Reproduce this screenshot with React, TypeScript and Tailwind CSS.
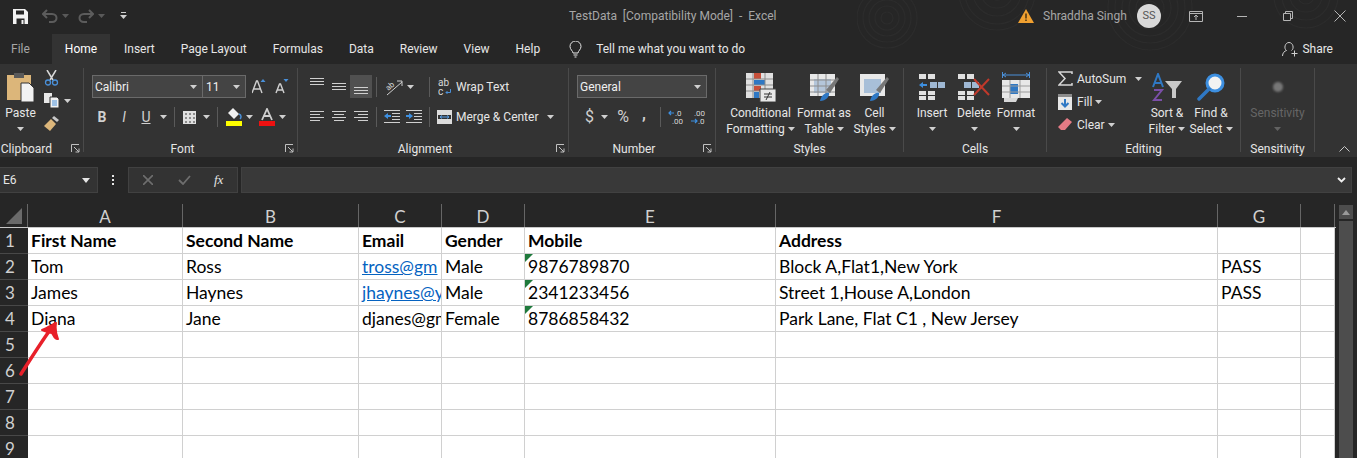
import type { ReactNode } from "react";

const COLS = [
  { name: "A", w: "w-[155px]" },
  { name: "B", w: "w-[176px]" },
  { name: "C", w: "w-[83px]" },
  { name: "D", w: "w-[83px]" },
  { name: "E", w: "w-[251px]" },
  { name: "F", w: "w-[442px]" },
  { name: "G", w: "w-[83px]" },
  { name: "", w: "w-[34px]" },
];

const ROWS: string[][] = [
  ["First Name", "Second Name", "Email", "Gender", "Mobile", "Address", "", ""],
  ["Tom", "Ross", "tross@gm", "Male", "9876789870", "Block A,Flat1,New York", "PASS", ""],
  ["James", "Haynes", "jhaynes@y", "Male", "2341233456", "Street 1,House A,London", "PASS", ""],
  ["Diana", "Jane", "djanes@gm", "Female", "8786858432", "Park Lane, Flat C1 , New Jersey", "", ""],
  ["", "", "", "", "", "", "", ""],
  ["", "", "", "", "", "", "", ""],
  ["", "", "", "", "", "", "", ""],
  ["", "", "", "", "", "", "", ""],
  ["", "", "", "", "", "", "", ""],
];

function Caret({ className = "" }: { className?: string }) {
  return (
    <svg width="7" height="4" viewBox="0 0 7 4" className={`shrink-0 ${className}`}>
      <path d="M0 0h7L3.5 4z" fill="#d0d0d0" />
    </svg>
  );
}

function Launcher() {
  return (
    <svg width="9" height="9" viewBox="0 0 9 9" className="mr-[3px]">
      <path d="M.5 8V.5H8M3 3l5 5M8 4.500V8H4.500" fill="none" stroke="#c0c0c0" />
    </svg>
  );
}

function Divider({ className = "" }: { className?: string }) {
  return <div className={`w-px shrink-0 bg-[#5a5a5a] ${className}`} />;
}

function Group({
  label,
  width,
  launcher,
  tail = "",
  children,
}: {
  label: string;
  width: string;
  launcher?: boolean;
  tail?: string;
  children: ReactNode;
}) {
  return (
    <>
      <div className={`${width} flex h-full shrink-0 flex-col`}>
        <div className="flex h-[76px] min-h-0">{children}</div>
        <div className="flex h-[17px] items-center text-[12px] text-[#e6e6e6]">
          <span className="flex-1" />
          <span>{label}</span>
          <span className={`flex flex-1 justify-end ${tail}`}>{launcher && <Launcher />}</span>
        </div>
      </div>
      <div className="my-[4px] h-[84px] w-px shrink-0 bg-[#4a4a4a]" />
    </>
  );
}

function Big({ icon, lines, width, disabled }: { icon: ReactNode; lines: [string, string?]; width: string; disabled?: boolean }) {
  return (
    <div className={`${width} flex shrink-0 flex-col items-center pt-[8px] text-[12px] leading-[16px] ${disabled ? "text-[#666]" : "text-[#e6e6e6]"}`}>
      <div className="flex h-[30px] items-center justify-center">{icon}</div>
      <div className="mt-[3px] whitespace-nowrap">{lines[0]}</div>
      <div className="flex h-[16px] items-center gap-[3px] whitespace-nowrap">
        {lines[1]}
        <Caret className={disabled ? "opacity-30" : ""} />
      </div>
    </div>
  );
}

function Rings() {
  return (
    <svg width="500" height="64" viewBox="0 0 500 64" className="pointer-events-none absolute right-0 top-0">
      <g fill="none" stroke="#2c2c2c" strokeWidth="1.200">
        {[6, 12, 18, 24, 30].map((r) => (
          <circle key={r} cx="30" cy="18" r={r} />
        ))}
        {[8, 16, 24, 32, 38].map((r) => (
          <circle key={r} cx="140" cy="-8" r={r} />
        ))}
        {[7, 14, 21, 28, 35, 42].map((r) => (
          <circle key={r} cx="293" cy="8" r={r} />
        ))}
        {[8, 16, 24, 32].map((r) => (
          <circle key={r} cx="449" cy="-4" r={r} />
        ))}
      </g>
    </svg>
  );
}

function TitleBar() {
  return (
    <div className="relative flex h-[32px] items-center text-[12px] text-[#a6a6a6]">
      <div className="flex w-[569px] shrink-0 items-center">
        <svg width="15" height="15" viewBox="0 0 15 15" className="ml-[13px]">
          <path d="M0 0h12l3 3v12H0z" fill="#f2f2f2" />
          <path d="M3 1.500h8v4H3z" fill="#262626" />
          <path d="M3.500 9.500h8V15h-8z" fill="#262626" />
          <path d="M8.500 11h2v4h-2z" fill="#f2f2f2" />
        </svg>
        <svg width="16" height="14" viewBox="0 0 16 14" className="ml-[14px]">
          <path d="M5 1 1 5l4 4M1 5h9c6 0 6 8 0 8H7" fill="none" stroke="#5c5c5c" strokeWidth="2" />
        </svg>
        <Caret className="ml-[4px] opacity-30" />
        <svg width="16" height="14" viewBox="0 0 16 14" className="ml-[9px]">
          <path d="M11 1l4 4-4 4M15 5H6c-6 0-6 8 0 8h3" fill="none" stroke="#5c5c5c" strokeWidth="2" />
        </svg>
        <Caret className="ml-[4px] opacity-30" />
        <svg width="7" height="8" viewBox="0 0 7 8" className="ml-[15px]">
          <path d="M1 0h5v1H1zM0 3h7L3.500 7z" fill="#d0d0d0" />
        </svg>
      </div>
      <div className="whitespace-pre">TestData  [Compatibility Mode]  -  Excel</div>
      <div className="ml-auto flex items-center pr-[11px]">
        <svg width="16" height="14" viewBox="0 0 16 14">
          <path d="M8 0l8 14H0z" fill="#f0a030" />
          <path d="M7.300 4.500h1.400v5H7.300zM7.300 10.500h1.400V12H7.300z" fill="#3a2a10" />
        </svg>
        <div className="ml-[9px] w-[83px] whitespace-nowrap">Shraddha Singh</div>
        <div className="ml-[11px] flex h-[24px] w-[24px] items-center justify-center rounded-full bg-[#d9d9d9] text-[11px] text-[#555]">SS</div>
        <svg width="14" height="11" viewBox="0 0 14 11" className="ml-[28px]">
          <path d="M.5.5h13v10H.5zM.5 2.500h13M7 9V4.500M5 6l2-2 2 2" fill="none" stroke="#b5b5b5" />
        </svg>
        <div className="ml-[34px] h-px w-[10px] bg-[#b5b5b5]" />
        <svg width="10" height="10" viewBox="0 0 10 10" className="ml-[36px]">
          <path d="M.5 2.500h7v7h-7zM2.500 2.500v-2h7v7h-2" fill="none" stroke="#b5b5b5" />
        </svg>
        <svg width="12" height="12" viewBox="0 0 12 12" className="ml-[41px]">
          <path d="M.5.5l11 11M11.500.5l-11 11" stroke="#b5b5b5" />
        </svg>
      </div>
    </div>
  );
}

function TabRow() {
  const tabs: [string, string][] = [
    ["Insert", "ml-[14px]"],
    ["Page Layout", "ml-[26px]"],
    ["Formulas", "ml-[26px]"],
    ["Data", "ml-[26px]"],
    ["Review", "ml-[26px]"],
    ["View", "ml-[26px]"],
    ["Help", "ml-[26px]"],
  ];
  return (
    <div className="relative flex h-[32px] items-end text-[12px] text-[#e6e6e6]">
      <div className="ml-[11px] flex h-[30px] w-[41px] items-center text-[#a6a6a6]">File</div>
      <div className="flex h-[30px] w-[58px] items-center justify-center bg-[#333333] text-white">Home</div>
      {tabs.map(([t, m]) => (
        <div key={t} className={`flex h-[30px] items-center whitespace-nowrap ${m}`}>{t}</div>
      ))}
      <div className="ml-[29px] flex h-[30px] items-center gap-[14px] whitespace-nowrap">
        <svg width="13" height="17" viewBox="0 0 13 17">
          <path d="M4 12c0-2-3-3.500-3-6.500a5.500 5.500 0 0 1 11 0c0 3-3 4.500-3 6.500zM4.500 14h4M5.500 16h2" fill="none" stroke="#e6e6e6" />
        </svg>
        Tell me what you want to do
      </div>
      <div className="ml-auto mr-[24px] flex h-[30px] items-center gap-[4px]">
        <svg width="16" height="16" viewBox="0 0 16 16">
          <path d="M.5 15c0-3 2-5 4-5.500-3-2-1.500-8 2.500-8s5.500 6 2.500 8M12.500 9.500v6M9.500 12.500h6" fill="none" stroke="#d0d0d0" />
        </svg>
        Share
      </div>
    </div>
  );
}

function Clipboard() {
  return (
    <Group label="Clipboard" width="w-[83px]" launcher tail="pl-[19px]">
      <div className="flex w-[41px] shrink-0 flex-col items-center pt-[8px] text-[12px] leading-[16px] text-[#e6e6e6]">
        <svg width="29" height="30" viewBox="0 0 29 30">
          <path d="M1 3h24v25H1z" fill="#dcb67a" />
          <path d="M8 1h10v5H8z" fill="#5a5a5a" />
          <path d="M15 11h8l5 5v14H15z" fill="#f2f2f2" stroke="#333" />
        </svg>
        <div className="mt-[3px]">Paste</div>
        <div className="flex h-[16px] items-center"><Caret /></div>
      </div>
      <div className="flex flex-col pt-[6px]">
        <svg width="15" height="16" viewBox="0 0 15 16" className="ml-[3px]">
          <path d="M3 0l6 10M12 0 6 10" stroke="#d8d8d8" strokeWidth="1.500" />
          <circle cx="4" cy="12.500" r="2.500" fill="none" stroke="#4a90d9" strokeWidth="1.300" />
          <circle cx="11" cy="12.500" r="2.500" fill="none" stroke="#4a90d9" strokeWidth="1.300" />
        </svg>
        <div className="mt-[7px] flex items-center gap-[4px]">
          <svg width="16" height="15" viewBox="0 0 16 15" className="ml-[3px]">
            <path d="M0 0h8v10H0z" fill="#e8e8e8" />
            <path d="M6 4h7l2 2v9H6z" fill="#f2f2f2" stroke="#333" />
            <path d="M8 8h5M8 10h5M8 12h5" stroke="#4a90d9" />
          </svg>
          <Caret />
        </div>
        <svg width="16" height="15" viewBox="0 0 16 15" className="ml-[3px] mt-[8px]">
          <path d="M10 0l5 4-2 2-5-4z" fill="#c8c8c8" />
          <path d="M7 3l5 5-6 7-6-5z" fill="#dcb67a" />
        </svg>
      </div>
    </Group>
  );
}

function FontGroup() {
  return (
    <Group label="Font" width="w-[213px]" launcher tail="pl-[16px]">
      <div className="flex w-full flex-col pt-[11px]">
        <div className="ml-[8px] flex items-center">
          <div className="flex h-[23px] w-[111px] items-center justify-between border border-[#6a6a6a] bg-[#444444] pl-[2px] pr-[5px] text-[12px] text-[#f0f0f0]">
            Calibri
            <Caret />
          </div>
          <div className="flex h-[23px] w-[43px] items-center justify-between border border-l-0 border-[#6a6a6a] bg-[#444444] pl-[3px] pr-[5px] text-[12px] text-[#f0f0f0]">
            11
            <Caret />
          </div>
          <svg width="15" height="15" viewBox="0 0 15 15" className="ml-[6px]">
            <path d="M0 14 4.500 2h1L10 14M2 10h6" fill="none" stroke="#d0d0d0" strokeWidth="1.400" />
            <path d="M8.500 3 11 0l2.500 3z" fill="#4a90d9" />
          </svg>
          <svg width="15" height="15" viewBox="0 0 15 15" className="ml-[8px]">
            <path d="M1 14 4.500 5h1L9 14M2.500 11h5" fill="none" stroke="#d0d0d0" strokeWidth="1.400" />
            <path d="M8.500 0h5L11 3z" fill="#4a90d9" />
          </svg>
        </div>
        <div className="ml-[7px] mt-[8px] flex h-[22px] items-center text-[14px] text-[#d0d0d0]">
          <span className="w-[22px] text-center font-bold">B</span>
          <span className="w-[22px] text-center italic">I</span>
          <span className="w-[22px] text-center underline">U</span>
          <Caret className="ml-[3px]" />
          <Divider className="ml-[7px] h-[20px]" />
          <svg width="13" height="13" viewBox="0 0 13 13" className="ml-[8px]">
            <path d="M0 0h13v13H0z" fill="#e0e0e0" />
            <path d="M2 2h2v2H2zM6 2h2v2H6zM10 2h2v2h-2zM2 6h2v2H2zM6 6h2v2H6zM10 6h2v2h-2zM2 10h2v2H2zM6 10h2v2H6zM10 10h2v2h-2z" fill="#8c8c8c" />
          </svg>
          <Caret className="ml-[7px]" />
          <Divider className="ml-[7px] h-[20px]" />
          <svg width="16" height="18" viewBox="0 0 16 18" className="ml-[8px]">
            <path d="M7 0l6 6-5 5-6-6z" fill="#f0f0f0" />
            <path d="M13 6c3 1 2 4 1 5" fill="none" stroke="#4a90d9" strokeWidth="1.500" />
            <path d="M0 13h16v5H0z" fill="#ffff00" />
          </svg>
          <Caret className="ml-[4px]" />
          <svg width="16" height="18" viewBox="0 0 16 18" className="ml-[6px]">
            <path d="M3 12 8 1l5 11M5 8h6" fill="none" stroke="#d0d0d0" strokeWidth="1.800" />
            <path d="M0 13h16v5H0z" fill="#ee1111" />
          </svg>
          <Caret className="ml-[4px]" />
        </div>
      </div>
    </Group>
  );
}

function AlignmentGroup() {
  return (
    <Group label="Alignment" width="w-[270px]" launcher tail="pl-[16px]">
      <div className="flex w-full flex-col pt-[11px]">
        <div className="ml-[12px] flex h-[23px] items-center">
          <svg width="14" height="23" viewBox="0 0 14 23"><path d="M0 3h14v1H0zM0 6h14v1H0zM0 9h14v1H0z" fill="#d0d0d0" /></svg>
          <svg width="14" height="23" viewBox="0 0 14 23" className="ml-[8px]"><path d="M0 8h14v1H0zM0 11h14v1H0zM0 14h14v1H0z" fill="#d0d0d0" /></svg>
          <div className="ml-[4px] flex h-[23px] w-[22px] items-center justify-center bg-[#505050]">
            <svg width="14" height="23" viewBox="0 0 14 23"><path d="M0 12h14v1H0zM0 15h14v1H0zM0 18h14v1H0z" fill="#d0d0d0" /></svg>
          </div>
          <Divider className="ml-[4px] h-[20px]" />
          <svg width="19" height="18" viewBox="0 0 19 18" className="ml-[7px]">
            <path d="M3 17 18 4M13 3h5v5" fill="none" stroke="#d0d0d0" />
            <text x="2" y="11" fontSize="8" fill="#d0d0d0" transform="rotate(-40 6 9)">ab</text>
          </svg>
          <Caret className="ml-[4px]" />
          <Divider className="ml-[15px] h-[20px]" />
          <svg width="14" height="18" viewBox="0 0 14 18" className="ml-[8px]">
            <text x="0" y="8" fontSize="10" fill="#d8d8d8">ab</text>
            <text x="0" y="17" fontSize="10" fill="#d8d8d8">c</text>
            <path d="M12.500 11v3.500H8M9.500 13 8 14.500 9.500 16" fill="none" stroke="#4a90d9" />
          </svg>
          <span className="ml-[4px] text-[12px] text-[#e6e6e6]">Wrap Text</span>
        </div>
        <div className="ml-[12px] mt-[8px] flex h-[22px] items-center">
          <svg width="14" height="14" viewBox="0 0 14 14" className="shrink-0"><path d="M0 1h14v1H0zM0 4h10v1H0zM0 7h14v1H0zM0 10h10v1H0z" fill="#d0d0d0" /></svg>
          <svg width="14" height="14" viewBox="0 0 14 14" className="ml-[8px] shrink-0"><path d="M0 1h14v1H0zM2 4h10v1H2zM0 7h14v1H0zM2 10h10v1H2z" fill="#d0d0d0" /></svg>
          <svg width="14" height="14" viewBox="0 0 14 14" className="ml-[8px] shrink-0"><path d="M0 1h14v1H0zM4 4h10v1H4zM0 7h14v1H0zM4 10h10v1H4z" fill="#d0d0d0" /></svg>
          <Divider className="ml-[8px] h-[20px]" />
          <svg width="16" height="14" viewBox="0 0 16 14" className="ml-[7px]">
            <path d="M0 0h16v1H0zM8 3h8v1H8zM8 6h8v1H8zM8 9h8v1H8zM0 12h16v1H0z" fill="#d0d0d0" />
            <path d="M0 6l4-3v2h3v2H4v2z" fill="#3d8fe0" />
          </svg>
          <svg width="16" height="14" viewBox="0 0 16 14" className="ml-[6px]">
            <path d="M0 0h16v1H0zM8 3h8v1H8zM8 6h8v1H8zM8 9h8v1H8zM0 12h16v1H0z" fill="#d0d0d0" />
            <path d="M7 6 3 3v2H0v2h3v2z" fill="#3d8fe0" />
          </svg>
          <Divider className="ml-[7px] h-[20px]" />
          <svg width="15" height="14" viewBox="0 0 15 14" className="ml-[7px]">
            <path d="M0 0h15v14H0z" fill="#dcdcdc" />
            <path d="M1 5h13v4H1z" fill="#333" />
            <path d="M3 7h9M3 7l2-1.500M3 7l2 1.500M12 7l-2-1.500M12 7l-2 1.500" stroke="#5aa0e8" />
          </svg>
          <span className="ml-[4px] whitespace-nowrap text-[12px] text-[#e6e6e6]">Merge &amp; Center</span>
          <Caret className="ml-[9px]" />
        </div>
      </div>
    </Group>
  );
}

function NumberGroup() {
  return (
    <Group label="Number" width="w-[146px]" launcher tail="pl-[16px]">
      <div className="flex w-full flex-col pt-[11px]">
        <div className="ml-[8px] flex h-[23px] w-[130px] items-center justify-between border border-[#6a6a6a] bg-[#444444] pl-[2px] pr-[5px] text-[12px] text-[#f0f0f0]">
          General
          <Caret />
        </div>
        <div className="ml-[16px] mt-[8px] flex h-[22px] items-center text-[16px] text-[#d0d0d0]">
          <span className="w-[8px] text-center">$</span>
          <Caret className="ml-[8px]" />
          <span className="ml-[8px] w-[14px] text-center">%</span>
          <span className="ml-[12px] mb-[6px] w-[6px] font-bold leading-[10px]">,</span>
          <Divider className="ml-[12px] h-[20px]" />
          <svg width="16" height="16" viewBox="0 0 16 16" className="ml-[7px]">
            <path d="M6 4H1M3 2 1 4l2 2" fill="none" stroke="#3d8fe0" strokeWidth="1.200" />
            <text x="7" y="7" fontSize="8" fill="#d8d8d8">.0</text>
            <text x="4" y="15" fontSize="8" fill="#d8d8d8">.00</text>
          </svg>
          <svg width="16" height="16" viewBox="0 0 16 16" className="ml-[6px]">
            <text x="4" y="7" fontSize="8" fill="#d8d8d8">.00</text>
            <path d="M1 12h6M5 10l2 2-2 2" fill="none" stroke="#3d8fe0" strokeWidth="1.200" />
            <text x="8" y="15" fontSize="8" fill="#d8d8d8">.0</text>
          </svg>
        </div>
      </div>
    </Group>
  );
}

function TableIcon({ blue }: { blue?: boolean }) {
  return (
    <svg width="29" height="30" viewBox="0 0 29 30">
      <path d="M0 2h25v22H0z" fill="#e8e8e8" />
      <path d="M4 7h17v14H4z" fill={blue ? "#a8bfd8" : "#b4c6da"} />
      <path d="M0 8h25M0 14h25M0 20h25M8 2v22M16 2v22" stroke="#8c8c8c" strokeWidth={blue ? 0 : 1} />
      <path d="M16 18 27 5l2 2-9 14z" fill="#777" />
      <path d="M10 29c1-5 5-9 9-8 1 3-3 8-9 8z" fill="#2f78c4" />
    </svg>
  );
}

function StylesGroup() {
  return (
    <Group label="Styles" width="w-[187px]">
      <Big
        width="w-[89px]"
        lines={["Conditional", "Formatting"]}
        icon={
          <svg width="30" height="30" viewBox="0 0 30 30">
            <path d="M0 1h27v25H0z" fill="#e0e0e0" />
            <path d="M8 1h7v6H8z" fill="#c8503a" />
            <path d="M8 8h11v5H8z" fill="#2f78c4" />
            <path d="M8 14h7v5H8z" fill="#c8503a" />
            <path d="M8 20h5v6H8z" fill="#2f78c4" />
            <path d="M0 7h27M0 13h27M0 19h27M7 1v25M19 1v25" stroke="#8c8c8c" />
            <path d="M14 17h16v13H14z" fill="#e8e8e8" stroke="#444" />
            <path d="M18 22h8M18 25h8M24 20l-4 8" stroke="#333" fill="none" />
          </svg>
        }
      />
      <Big width="w-[52px] -ml-[7px]" lines={["Format as", "Table"]} icon={<TableIcon />} />
      <Big width="w-[49px]" lines={["Cell", "Styles"]} icon={<TableIcon blue />} />
    </Group>
  );
}

function CellsGroup() {
  const base = <path d="M0 1h7v5H0zM9 1h7v5H9zM0 18h7v4H0zM9 18h7v4H9zM0 23h7v4H0zM9 23h7v4H9z" fill="#e0e0e0" />;
  return (
    <Group label="Cells" width="w-[142px]">
      <Big
        width="w-[42px] ml-[7px]"
        lines={["Insert"]}
        icon={
          <svg width="27" height="28" viewBox="0 0 27 28">
            {base}
            <path d="M11 9h7v6h-7zM19 9h7v6h-7z" fill="#9fb8d4" />
            <path d="M0 12l4-3v2h4v2H4v2z" fill="#3d8fe0" />
          </svg>
        }
      />
      <Big
        width="w-[42px]"
        lines={["Delete"]}
        icon={
          <svg width="32" height="28" viewBox="0 0 32 28">
            {base}
            <path d="M6 9h7v6H6zM14 9h7v6h-7z" fill="#9fb8d4" />
            <path d="M16 6l15 16M31 6 16 22" stroke="#c0392b" strokeWidth="2" />
          </svg>
        }
      />
      <Big
        width="w-[42px]"
        lines={["Format"]}
        icon={
          <svg width="28" height="30" viewBox="0 0 28 30">
            <path d="M1 3h26M1 3l3-2M1 3l3 2M27 3l-3-2M27 3l-3 2M.5 0v6M27.500 0v6" fill="none" stroke="#4a90d9" />
            <path d="M0 8h28v18H0z" fill="#e8e8e8" />
            <path d="M8 12h8v10H8z" fill="#2f78c4" />
            <path d="M0 14h28M0 20h28M8 8v18M18 8v18" stroke="#9c9c9c" />
            <path d="M2 26h14l-2 4H2z" fill="#d8d8d8" />
          </svg>
        }
      />
    </Group>
  );
}

function EditingGroup() {
  return (
    <Group label="Editing" width="w-[193px]">
      <div className="ml-[11px] flex w-[96px] shrink-0 flex-col pt-[3px] text-[12px] text-[#e6e6e6]">
        <div className="flex h-[23px] items-center">
          <span className="w-[19px]">
            <svg width="15" height="15" viewBox="0 0 15 15"><path d="M14 3V1H1l6 6.500L1 14h13v-2" fill="none" stroke="#d8d8d8" strokeWidth="1.500" /></svg>
          </span>
          AutoSum
          <Caret className="ml-[9px]" />
        </div>
        <div className="flex h-[23px] items-center">
          <span className="w-[19px]">
            <svg width="15" height="16" viewBox="0 0 15 16"><path d="M0 0h14v16H0z" fill="#e8e8e8" /><path d="M0 0h14v3H0z" fill="#8c8c8c" /><path d="M7 5v7M3.500 9 7 12.500 10.500 9" fill="none" stroke="#2f78c4" strokeWidth="2" /></svg>
          </span>
          Fill
          <Caret className="ml-[3px]" />
        </div>
        <div className="flex h-[23px] items-center">
          <span className="w-[19px]">
            <svg width="14" height="13" viewBox="0 0 14 13"><path d="M9 0l5 4-7 8H3L0 9z" fill="#e57b85" /></svg>
          </span>
          Clear
          <Caret className="ml-[3px]" />
        </div>
      </div>
      <Big
        width="w-[46px] -ml-[10px]"
        lines={["Sort &", "Filter"]}
        icon={
          <svg width="31" height="29" viewBox="0 0 31 29">
            <path d="M1 14 6 1l5 13M3 10h6" fill="none" stroke="#2f78c4" strokeWidth="2" />
            <path d="M2 17h8L2 27h8" fill="none" stroke="#7b4fa8" strokeWidth="2" />
            <path d="M13 8h17l-6 8v9h-4v-9z" fill="#c8c8c8" />
          </svg>
        }
      />
      <Big
        width="w-[42px]"
        lines={["Find &", "Select"]}
        icon={
          <svg width="28" height="28" viewBox="0 0 28 28">
            <circle cx="18" cy="10" r="8" fill="#f2f2f2" stroke="#3d8fe0" strokeWidth="3" />
            <path d="M12 16 2 26" stroke="#2f78c4" strokeWidth="3.500" strokeLinecap="round" />
          </svg>
        }
      />
    </Group>
  );
}

function Ribbon() {
  return (
    <div className="flex h-[93px] bg-[#333333]">
      <Clipboard />
      <FontGroup />
      <AlignmentGroup />
      <NumberGroup />
      <StylesGroup />
      <CellsGroup />
      <EditingGroup />
      <Group label="Sensitivity" width="w-[73px]">
        <Big
          width="w-full"
          disabled
          lines={["Sensitivity"]}
          icon={<div className="h-[10px] w-[10px] rounded-full bg-[#777] blur-[1px]" />}
        />
      </Group>
      <div className="flex flex-1 items-end justify-end pb-[5px] pr-[7px]">
        <svg width="11" height="6" viewBox="0 0 11 6"><path d="M.5 5.500l5-5 5 5" fill="none" stroke="#c8c8c8" /></svg>
      </div>
    </div>
  );
}

function FormulaBar() {
  return (
    <div className="flex h-[47px] items-start bg-[#262626] pt-[10px]">
      <div className="flex h-[26px] w-[98px] items-center justify-between border border-l-0 border-[#414141] bg-[#333333] pl-[3px] pr-[7px] text-[12px] text-[#e6e6e6]">
        E6
        <svg width="8" height="5" viewBox="0 0 8 5"><path d="M0 0h8L4 5z" fill="#e6e6e6" /></svg>
      </div>
      <div className="flex h-[26px] w-[30px] flex-col items-center justify-center gap-[2px]">
        <span className="h-[2px] w-[2px] bg-[#e6e6e6]" />
        <span className="h-[2px] w-[2px] bg-[#e6e6e6]" />
        <span className="h-[2px] w-[2px] bg-[#e6e6e6]" />
      </div>
      <div className="flex h-[26px] w-[110px] items-center border border-[#414141] bg-[#333333]">
        <svg width="10" height="10" viewBox="0 0 10 10" className="ml-[14px]"><path d="M0 0l10 10M10 0 0 10" stroke="#6e6e6e" strokeWidth="1.600" /></svg>
        <svg width="13" height="10" viewBox="0 0 13 10" className="ml-[25px]"><path d="M1 5l4 4 7-8" fill="none" stroke="#6e6e6e" strokeWidth="1.800" /></svg>
        <span className="ml-[23px] font-['Liberation_Serif',serif] text-[13px] italic text-[#e6e6e6]">fx</span>
      </div>
      <div className="ml-[3px] flex h-[26px] w-[1111px] items-center justify-end border border-[#414141] bg-[#393939] pr-[5px]">
        <svg width="9" height="6" viewBox="0 0 9 6"><path d="M1 1l3.500 3.500L8 1" fill="none" stroke="#f0f0f0" strokeWidth="1.800" /></svg>
      </div>
    </div>
  );
}

function Cell({ text, row, col }: { text: string; row: number; col: number }) {
  const link = col === 2 && (row === 1 || row === 2);
  const flagged = col === 4 && row >= 1 && row <= 3;
  return (
    <div className={`${COLS[col].w} relative h-[26px] shrink-0 overflow-hidden whitespace-nowrap border-b border-r border-[#d0d0d0] pl-[3px] text-[17.5px] leading-[26px] ${row === 0 ? "font-bold text-black" : link ? "text-[#0563c1] underline" : "text-black"}`}>
      {flagged && (
        <svg width="8" height="8" viewBox="0 0 8 8" className="absolute left-0 top-0">
          <path d="M0 0h8L0 8z" fill="#1f7a3c" />
        </svg>
      )}
      {text}
    </div>
  );
}

function Sheet() {
  return (
    <div className="relative flex min-h-0 flex-1 bg-[#262626]">
      <div className="flex w-[1336px] shrink-0 flex-col font-['Lato',sans-serif]">
        <div className="flex h-[24px] shrink-0 border-b border-[#c8c8c8]">
          <div className="flex w-[28px] items-end justify-center border-r border-[#666] pb-[3px]">
            <svg width="16" height="16" viewBox="0 0 16 16"><path d="M16 0v16H0z" fill="#6a6a6a" /></svg>
          </div>
          {COLS.map((c) => (
            <div key={c.w + c.name} className={`${c.w} flex items-center justify-center border-r border-[#666] pt-[3px] text-[17px] text-[#d0d0d0]`}>
              {c.name}
            </div>
          ))}
        </div>
        {ROWS.map((cells, r) => (
          <div key={r} className="flex h-[26px] shrink-0">
            <div className="flex w-[28px] shrink-0 items-center border-b border-[#484848] bg-[#262626] pl-[5px] text-[17px] text-[#d0d0d0]">{r + 1}</div>
            <div className="flex bg-white">
              {cells.map((t, c) => (
                <Cell key={c} text={t} row={r} col={c} />
              ))}
            </div>
          </div>
        ))}
      </div>
      <div className="ml-[3px] mt-[1px] flex w-[14px] flex-col gap-[2px]">
        <div className="flex h-[14px] items-center justify-center bg-[#4d4d4d]">
          <svg width="8" height="5" viewBox="0 0 8 5"><path d="M0 5h8L4 0z" fill="#9a9a9a" /></svg>
        </div>
        <div className="flex-1 bg-[#4d4d4d]" />
      </div>
      <svg width="46" height="54" viewBox="0 0 46 54" className="absolute left-[18px] top-[118px]">
        <path d="M3 52 C12 38 22 22 32 8" fill="none" stroke="#e8202a" strokeWidth="3.500" strokeLinecap="round" />
        <path d="M24 8 C29 6 34 3 38 1 C37 7 38 12 40 17 C37 18 36 14 34 11 C31 10 27 10 24 8z" fill="#e8202a" stroke="#e8202a" strokeWidth="2" strokeLinejoin="round" />
      </svg>
    </div>
  );
}

export default function App() {
  return (
    <div className="flex h-[458px] w-[1357px] flex-col overflow-hidden bg-[#262626] font-['Roboto',sans-serif]">
      <div className="relative shrink-0">
        <Rings />
        <TitleBar />
        <TabRow />
      </div>
      <Ribbon />
      <FormulaBar />
      <Sheet />
    </div>
  );
}
